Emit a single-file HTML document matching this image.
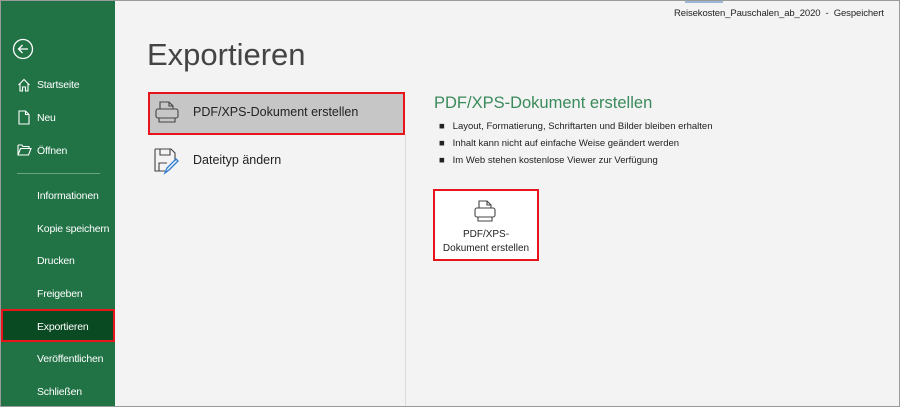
<!DOCTYPE html>
<html><head><meta charset="utf-8"><style>
*{margin:0;padding:0;box-sizing:border-box}
body{width:900px;height:407px;background:#f3f3f3;font-family:"Liberation Sans",sans-serif;position:relative;overflow:hidden;white-space:nowrap}
.frame{position:absolute;left:0;top:0;width:900px;height:407px;border:1px solid #9a9a9a;pointer-events:none;z-index:10}
.side{position:absolute;left:1px;top:1px;width:114px;height:405px;background:#217346;color:#fff}
.it{position:absolute;left:36px;font-size:10.5px;line-height:14px;letter-spacing:-0.2px}
.abs{position:absolute}
</style></head><body>
<div class="side">
<svg class="abs" style="left:11px;top:37px" width="22" height="22" viewBox="0 0 22 22"><circle cx="11" cy="11" r="9.5" fill="none" stroke="#fff" stroke-width="1.3"/><path d="M16 11H6.5M10.5 7L6.5 11L10.5 15" fill="none" stroke="#fff" stroke-width="1.3"/></svg>
<svg class="abs" style="left:16px;top:77px" width="14" height="14" viewBox="0 0 14 14"><path d="M1.5 7L7 1.5L12.5 7M3 5.5V13H5.5V9H8.5V13H11V5.5" fill="none" stroke="#fff" stroke-width="1.1"/></svg>
<div class="it" style="top:77px">Startseite</div>
<svg class="abs" style="left:17px;top:109px" width="12" height="15" viewBox="0 0 12 15"><path d="M1 1H7.5L11 4.5V14H1Z M7.5 1V4.5H11" fill="none" stroke="#fff" stroke-width="1.1"/></svg>
<div class="it" style="top:110px">Neu</div>
<svg class="abs" style="left:16px;top:143px" width="15" height="12" viewBox="0 0 15 12"><path d="M1 1H5L6 2.5H12V4M1 1V11H11.5L14 4.5H3.5L1 11" fill="none" stroke="#fff" stroke-width="1.1"/></svg>
<div class="it" style="top:143px">Öffnen</div>
<div class="abs" style="left:16px;top:172px;width:83px;height:1px;background:#6aa582"></div>
<div class="it" style="top:188px">Informationen</div>
<div class="it" style="top:221px">Kopie speichern</div>
<div class="it" style="top:253px">Drucken</div>
<div class="it" style="top:286px">Freigeben</div>
<div class="abs" style="left:0;top:308px;width:114px;height:33px;background:#0a4a22;border:2px solid #e8141c"></div>
<div class="it" style="top:319px">Exportieren</div>
<div class="it" style="top:351px">Veröffentlichen</div>
<div class="it" style="top:384px">Schließen</div>
</div>
<div class="abs" style="left:685px;top:1px;width:38px;height:2px;background:#9bb8d8"></div>
<div class="abs" style="left:674px;top:8px;font-size:9.5px;color:#222;letter-spacing:-0.1px">Reisekosten_Pauschalen_ab_2020 &nbsp;- &nbsp;Gespeichert</div>
<div class="abs" style="left:147px;top:37px;font-size:31px;color:#444">Exportieren</div>
<div class="abs" style="left:148px;top:92px;width:257px;height:43px;background:#c6c6c6;border:2px solid #e8141c"></div>
<svg class="abs" style="left:154px;top:100px" width="26" height="26" viewBox="0 0 26 26"><path d="M6 9V2H15L19 6V9M15 2V6H19" fill="none" stroke="#444" stroke-width="1.1"/><rect x="2" y="9" width="22" height="9" rx="2" fill="none" stroke="#444" stroke-width="1.1"/><path d="M5 18V22H21V18" fill="none" stroke="#444" stroke-width="1.1"/></svg>
<div class="abs" style="left:193px;top:105px;font-size:12.5px;color:#222">PDF/XPS-Dokument erstellen</div>
<svg class="abs" style="left:153px;top:147px" width="28" height="28" viewBox="0 0 28 28"><path d="M2 2H18L22 6V14M2 2V24H12M7 2V8H17V2M6 24V16H14" fill="none" stroke="#444" stroke-width="1.1"/><path d="M12 26L14 21L23 12L25 14L16 23Z" fill="none" stroke="#2b7cd3" stroke-width="1.3"/></svg>
<div class="abs" style="left:193px;top:153px;font-size:12.5px;color:#222">Dateityp ändern</div>
<div class="abs" style="left:405px;top:135px;width:1px;height:272px;background:#dcdcdc"></div>
<div class="abs" style="left:434px;top:94px;font-size:16.5px;color:#3a8a5b">PDF/XPS-Dokument erstellen</div>
<div class="abs" style="left:439px;top:118px;font-size:9.5px;color:#222;line-height:17px">
<div>■&nbsp;&nbsp;&nbsp;Layout, Formatierung, Schriftarten und Bilder bleiben erhalten</div>
<div>■&nbsp;&nbsp;&nbsp;Inhalt kann nicht auf einfache Weise geändert werden</div>
<div>■&nbsp;&nbsp;&nbsp;Im Web stehen kostenlose Viewer zur Verfügung</div>
</div>
<div class="abs" style="left:433px;top:189px;width:106px;height:72px;background:#fff;border:2px solid #e8141c"></div>
<svg class="abs" style="left:473px;top:200px" width="24" height="24" viewBox="0 0 24 24"><path d="M6 8V1H14L18 5V8M14 1V5H18" fill="none" stroke="#444" stroke-width="1.1"/><rect x="2" y="8" width="20" height="9" rx="2" fill="none" stroke="#444" stroke-width="1.1"/><path d="M5 17V21H19V17" fill="none" stroke="#444" stroke-width="1.1"/></svg>
<div class="abs" style="left:433px;top:228px;width:106px;text-align:center;font-size:10px;color:#222;line-height:14px">PDF/XPS-<br>Dokument erstellen</div>
<div class="frame"></div>
</body></html>
